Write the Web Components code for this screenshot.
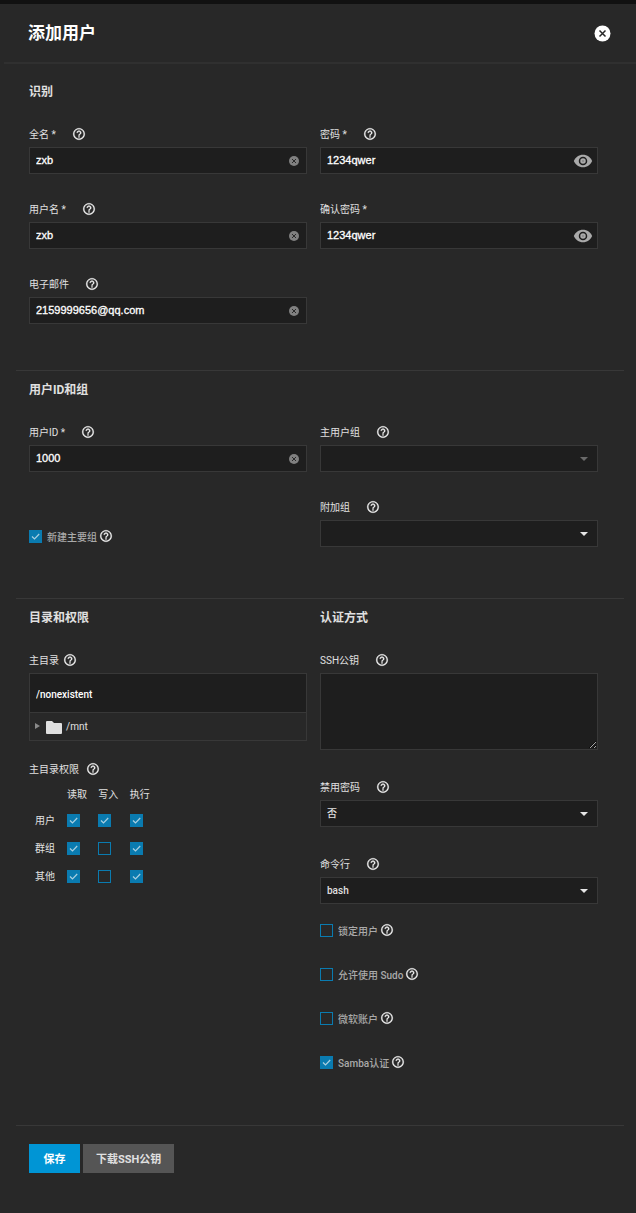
<!DOCTYPE html>
<html lang="zh-CN">
<head>
<meta charset="utf-8">
<meta name="viewport" content="width=device-width, initial-scale=1">
<title>添加用户</title>
<style>
  :root {
    --bg: #282828;
    --bg-input: #1e1e1e;
    --line: #383838;
    --fg: #e0e0e0;
    --fg-dim: #aaaaaa;
    --primary: #0095d5;
    --check: #0a7bb0;
  }

  body {
    margin: 0;
    background: var(--bg);
    color: var(--fg);
    font-family: Roboto, "Noto Sans CJK SC", sans-serif;
    font-size: 10px;
  }
</style>
</head>
<body>
<user-form-page></user-form-page>

<script>
/* Shared rules for the small text controls */
const controlStyles = `
  *, *::before { box-sizing: border-box; }
  input, select, textarea, button { font: inherit; color: inherit; margin: 0; }
  button { background: none; border: 0; padding: 0; display: flex; cursor: pointer; }
  svg { display: block; }
`;

/* <help-tip> — round question mark button */
class HelpTip extends HTMLElement {
  constructor() {
    super();
    this.attachShadow({ mode: 'open' });
  }

  connectedCallback() {
    this.shadowRoot.innerHTML = `
      <style>
        ${controlStyles}
        :host { display: inline-flex; flex-shrink: 0; color: #f0f0f0; }
      </style>
      <button type="button" aria-label="帮助">
        <svg width="14" height="14" viewBox="0 0 24 24" fill="currentColor" aria-hidden="true">
          <path d="M11 18h2v-2h-2v2zm1-16C6.48 2 2 6.48 2 12s4.48 10 10 10 10-4.48 10-10S17.52 2 12 2zm0 18c-4.41 0-8-3.59-8-8s3.59-8 8-8 8 3.59 8 8-3.59 8-8 8zm0-14c-2.21 0-4 1.79-4 4h2c0-1.1.9-2 2-2s2 .9 2 2c0 2-3 1.75-3 5h2c0-2.25 3-2.5 3-5 0-2.21-1.79-4-4-4z"
                stroke="currentColor" stroke-width="0.4"/>
        </svg>
      </button>
    `;
  }
}
customElements.define('help-tip', HelpTip);

/* Label row + bordered box, used by every field type */
const fieldStyles = `
  ${controlStyles}
  :host { display: block; }
  .head { display: flex; align-items: center; gap: 16px; height: 23px; margin-bottom: 2px; }
  .box {
    display: grid;
    align-items: center;
    min-height: 27px;
    background: var(--bg-input);
    border: 1px solid var(--line);
  }
  .box > * { grid-area: 1 / 1; }
  .box > input, .box > select {
    width: 100%;
    height: 25px;
    padding: 0 6px;
    background: none;
    border: 0;
    border-radius: 0;
    outline: 0;
    appearance: none;
  }
`;

const fieldHead = (el) => `
  <div class="head">
    <label for="control">${el.getAttribute('label')}</label>
    ${el.hasAttribute('help') ? '<help-tip></help-tip>' : ''}
  </div>
`;

/* <text-field label value action="clear|reveal" help> */
class TextField extends HTMLElement {
  constructor() {
    super();
    this.attachShadow({ mode: 'open' });
  }

  connectedCallback() {
    const reveal = this.getAttribute('action') === 'reveal';

    this.shadowRoot.innerHTML = `
      <style>
        ${fieldStyles}
        .box > input {
          padding-bottom: 2px;
          color: #fff;
          font-family: "Liberation Sans", Arial, sans-serif;
          font-size: 11px;
          -webkit-text-stroke: 0.3px #fff;
        }
        .box > button { justify-self: end; }
        .clear { margin-right: 7px; }
        .reveal { margin-right: 4px; }
      </style>
      ${fieldHead(this)}
      <div class="box">
        <input id="control" type="text" value="${this.getAttribute('value')}">
        ${reveal ? `
          <button class="reveal" type="button" aria-label="显示密码">
            <svg width="20" height="20" viewBox="0 0 24 24" fill="#aaa" aria-hidden="true">
              <path d="M12 4.5C7 4.5 2.73 7.61 1 12c1.73 4.39 6 7.5 11 7.5s9.27-3.11 11-7.5c-1.73-4.39-6-7.5-11-7.5z"/>
              <circle cx="12" cy="12" r="4.2" fill="none" stroke="#1e1e1e" stroke-width="1.8"/>
              <circle cx="12" cy="12" r="0.8" fill="#666"/>
            </svg>
          </button>` : `
          <button class="clear" type="button" aria-label="清除">
            <svg width="10" height="10" viewBox="0 0 10 10" aria-hidden="true">
              <circle cx="5" cy="5" r="5" fill="#808080"/>
              <path d="M3 3l4 4M7 3l-4 4" stroke="#2a2a2a" stroke-width="1"/>
            </svg>
          </button>`}
      </div>
    `;

    const input = this.shadowRoot.querySelector('input');
    this.shadowRoot.querySelector('.box > button').addEventListener('click', () => {
      if (reveal) {
        input.type = input.type === 'text' ? 'password' : 'text';
      } else {
        input.value = '';
      }
    });
  }
}
customElements.define('text-field', TextField);

/* <select-field label value disabled help> */
class SelectField extends HTMLElement {
  constructor() {
    super();
    this.attachShadow({ mode: 'open' });
  }

  connectedCallback() {
    const disabled = this.hasAttribute('disabled');
    const value = this.getAttribute('value') || '';

    this.shadowRoot.innerHTML = `
      <style>
        ${fieldStyles}
        select { opacity: 1; font-weight: 500; }
        .arrow { justify-self: end; margin-right: 9px; pointer-events: none; }
      </style>
      ${fieldHead(this)}
      <div class="box">
        <select id="control" ${disabled ? 'disabled' : ''}><option>${value}</option></select>
        <svg class="arrow" width="8" height="4" viewBox="0 0 8 4" aria-hidden="true">
          <path d="M0 0h8L4 4z" fill="${disabled ? '#6a6a6a' : '#e6e6e6'}"/>
        </svg>
      </div>
    `;
  }
}
customElements.define('select-field', SelectField);

/* <area-field label help> */
class AreaField extends HTMLElement {
  constructor() {
    super();
    this.attachShadow({ mode: 'open' });
  }

  connectedCallback() {
    this.shadowRoot.innerHTML = `
      <style>
        ${fieldStyles}
        textarea {
          display: block;
          width: 100%;
          height: 77px;
          padding: 7px;
          background: var(--bg-input);
          border: 1px solid var(--line);
          outline: 0;
          resize: vertical;
          color-scheme: dark;
        }
      </style>
      ${fieldHead(this)}
      <textarea id="control"></textarea>
    `;
  }
}
customElements.define('area-field', AreaField);

const checkboxStyles = `
  input[type="checkbox"] {
    appearance: none;
    display: block;
    flex-shrink: 0;
    width: 13px;
    height: 13px;
    margin: 0;
    border: 1px solid var(--check);
  }
  input[type="checkbox"]:checked {
    background: var(--check) url('data:image/svg+xml,<svg xmlns="http://www.w3.org/2000/svg" viewBox="0 0 11 11"><path d="M2 5.5l2.500 2.500L9.2 3" fill="none" stroke="%23a9cfe0" stroke-width="1.2"/></svg>');
  }
`;

/* <check-field checked>label text</check-field> */
class CheckField extends HTMLElement {
  constructor() {
    super();
    this.attachShadow({ mode: 'open' });
  }

  connectedCallback() {
    this.shadowRoot.innerHTML = `
      <style>
        ${controlStyles}
        ${checkboxStyles}
        :host { display: flex; align-items: center; gap: 2px; height: 44px; }
        label { display: flex; align-items: center; gap: 5px; color: var(--fg-dim); font-weight: 500; }
      </style>
      <label>
        <input type="checkbox" ${this.hasAttribute('checked') ? 'checked' : ''}>
        <slot></slot>
      </label>
      <help-tip></help-tip>
    `;
  }
}
customElements.define('check-field', CheckField);

/* <path-explorer label value root> — path box with the folder tree under it */
class PathExplorer extends HTMLElement {
  constructor() {
    super();
    this.attachShadow({ mode: 'open' });
  }

  connectedCallback() {
    this.shadowRoot.innerHTML = `
      <style>
        ${fieldStyles}
        .head { gap: 4px; }
        .box > input { height: 38px; padding-top: 3px; color: #fff; font-weight: 500; }
        .tree {
          display: flex;
          align-items: center;
          height: 28px;
          padding: 0 5px;
          border: 1px solid var(--line);
          border-top: 0;
        }
        .tree button { align-items: center; }
        .toggle { width: 10px; }
        .folder { gap: 3px; }
      </style>
      ${fieldHead(this)}
      <div class="box">
        <input id="control" type="text" value="${this.getAttribute('value')}">
      </div>
      <div class="tree">
        <button class="toggle" type="button" aria-label="展开">
          <svg width="6" height="10" viewBox="0 0 6 10" aria-hidden="true"><path d="M0 1l5 3-5 3z" fill="#8a8a8a"/></svg>
        </button>
        <button class="folder" type="button">
          <svg width="18" height="18" viewBox="0 0 18 18" aria-hidden="true">
            <path d="M2 3h5l2 2h7q1 0 1 1v9q0 1-1 1H2q-1 0-1-1V4q0-1 1-1z" fill="#e0e0e0"/>
          </svg>
          <span>${this.getAttribute('root')}</span>
        </button>
      </div>
    `;
  }
}
customElements.define('path-explorer', PathExplorer);

/* <mode-table label> — read / write / execute grid */
class ModeTable extends HTMLElement {
  constructor() {
    super();
    this.attachShadow({ mode: 'open' });
  }

  connectedCallback() {
    const columns = ['读取', '写入', '执行'];
    const rows = [
      ['用户', [1, 1, 1]],
      ['群组', [1, 0, 1]],
      ['其他', [1, 0, 1]],
    ];

    this.shadowRoot.innerHTML = `
      <style>
        ${controlStyles}
        ${checkboxStyles}
        :host { display: block; }
        .head { display: flex; align-items: center; gap: 7px; height: 23px; margin-bottom: 2px; }
        table { border-collapse: collapse; table-layout: fixed; width: 132px; }
        th, td { padding: 0; height: 28px; text-align: left; font-weight: 400; line-height: 14px; }
        th { padding-top: 2px; }
        thead th { height: 24px; }
        th:first-child { width: 38px; padding-left: 6px; }
      </style>
      <div class="head"><span id="title">${this.getAttribute('label')}</span><help-tip></help-tip></div>
      <table aria-labelledby="title">
        <thead><tr><th></th>${columns.map((c) => `<th scope="col">${c}</th>`).join('')}</tr></thead>
        <tbody>
          ${rows.map(([name, modes]) => `
            <tr><th scope="row">${name}</th>${modes.map((on, i) => `
              <td><input type="checkbox" aria-label="${name} ${columns[i]}" ${on ? 'checked' : ''}></td>`).join('')}
            </tr>`).join('')}
        </tbody>
      </table>
    `;
  }
}
customElements.define('mode-table', ModeTable);

/* <form-column heading> — titled stack of fields */
class FormColumn extends HTMLElement {
  constructor() {
    super();
    this.attachShadow({ mode: 'open' });
  }

  connectedCallback() {
    this.shadowRoot.innerHTML = `
      <style>
        :host { display: block; min-width: 0; padding-right: 13px; }
        h2 { margin: 0 0 21px; height: 18px; font-size: 12px; line-height: 18px; font-weight: 700; }
        .fields { display: flex; flex-direction: column; gap: var(--field-gap, 23px); }
      </style>
      <h2>${this.getAttribute('heading') || ''}</h2>
      <div class="fields"><slot></slot></div>
    `;
  }
}
customElements.define('form-column', FormColumn);

class UserFormPage extends HTMLElement {
  constructor() {
    super();
    this.attachShadow({ mode: 'open' });
  }

  connectedCallback() {
    this.shadowRoot.innerHTML = `
      <style>
        ${controlStyles}
        :host { display: block; border-top: 4px solid #111; padding-bottom: 40px; }

        header {
          display: flex;
          align-items: center;
          justify-content: space-between;
          height: 60px;
          margin-left: 4px;
          padding: 0 25px 0 24px;
          border-bottom: 2px solid #303030;
        }
        h1 { margin: 0; color: #fff; font-size: 17px; line-height: 24px; font-weight: 700; }

        section {
          display: grid;
          grid-template-columns: 1fr 1fr;
          margin: 0 12px 0 16px;
          padding: 10px 13px 40px;
          border-top: 1px solid var(--line);
        }
        .identity { border-top: 0; padding-top: 19px; padding-bottom: 46px; }
        .new-group { margin-top: 19px; }
        .access { --field-gap: 25px; padding-bottom: 41px; }
        .home { --field-gap: 16px; }
        .checks { margin-top: -21px; }

        footer {
          display: flex;
          gap: 3px;
          margin: 0 12px 0 16px;
          padding: 18px 13px;
          border-top: 1px solid var(--line);
        }
        footer button {
          align-items: center;
          justify-content: center;
          min-width: 51px;
          height: 29px;
          padding: 0 13px 2px;
          background: #555;
          font-size: 11px;
          font-weight: 700;
        }
        footer .save { background: var(--primary); color: #fff; }
      </style>

      <header>
        <h1>添加用户</h1>
        <button type="button" aria-label="关闭">
          <svg width="17" height="17" viewBox="0 0 17 17" aria-hidden="true">
            <circle cx="8.5" cy="8.5" r="8" fill="#fff"/>
            <path d="M5.5 5.5l6 6M11.5 5.5l-6 6" stroke="#282828" stroke-width="1.5"/>
          </svg>
        </button>
      </header>

      <form>
        <section class="identity">
          <form-column heading="识别">
            <text-field label="全名 *" value="zxb" help></text-field>
            <text-field label="用户名 *" value="zxb" help></text-field>
            <text-field label="电子邮件" value="2159999656@qq.com" help></text-field>
          </form-column>
          <form-column>
            <text-field label="密码 *" value="1234qwer" action="reveal" help></text-field>
            <text-field label="确认密码 *" value="1234qwer" action="reveal"></text-field>
          </form-column>
        </section>

        <section>
          <form-column heading="用户ID和组">
            <text-field label="用户ID *" value="1000" help></text-field>
            <check-field class="new-group" checked>新建主要组</check-field>
          </form-column>
          <form-column>
            <select-field label="主用户组" disabled help></select-field>
            <select-field label="附加组" help></select-field>
          </form-column>
        </section>

        <section class="access">
          <form-column class="home" heading="目录和权限">
            <path-explorer label="主目录" value="/nonexistent" root="/mnt" help></path-explorer>
            <mode-table label="主目录权限"></mode-table>
          </form-column>
          <form-column heading="认证方式">
            <area-field label="SSH公钥" help></area-field>
            <select-field label="禁用密码" value="否" help></select-field>
            <select-field label="命令行" value="bash" help></select-field>
            <div class="checks">
              <check-field>锁定用户</check-field>
              <check-field>允许使用 Sudo</check-field>
              <check-field>微软账户</check-field>
              <check-field checked>Samba认证</check-field>
            </div>
          </form-column>
        </section>

        <footer>
          <button class="save" type="button">保存</button>
          <button type="button">下载SSH公钥</button>
        </footer>
      </form>
    `;
  }
}
customElements.define('user-form-page', UserFormPage);
</script>
</body>
</html>
